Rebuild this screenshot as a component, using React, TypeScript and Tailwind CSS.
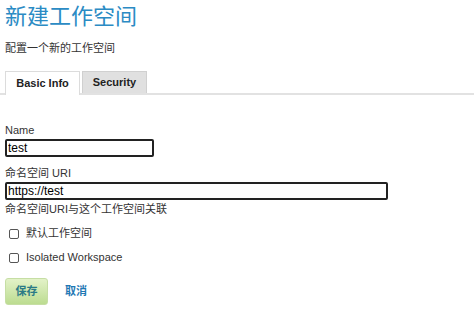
import React, { useState } from 'react';

const sans = '"Liberation Sans", "Noto Sans CJK SC", sans-serif';

export default function App() {
    const [name, setName] = useState('test');
    const [uri, setUri] = useState('https://test');
    const [isDefault, setIsDefault] = useState(false);
    const [isolated, setIsolated] = useState(false);

    return (
        <div className="w-[474px] h-[310px] bg-white text-[#333] overflow-hidden" style={{ fontFamily: sans }}>
            <div className="pl-[5px]">
                <h1 className="pt-[4px] text-[22px] leading-[26px] text-[#2b8bc4]">新建工作空间</h1>
                <p className="mt-[11px] text-[11px] leading-[14px] text-[#333]">配置一个新的工作空间</p>
            </div>

            <div className="mt-[16px] flex items-end gap-[2px] pl-[5px] border-b-2 border-[#e2e2e2] h-[24px]">
                <div className="h-[24px] -mb-[2px] w-[75px] flex items-center justify-center bg-white border border-b-0 border-[#dcdcdc] text-[11px] font-bold text-[#222]">
                    Basic Info
                </div>
                <div className="h-[22px] w-[65px] flex items-center justify-center bg-[#e0e0e0] border border-b-0 border-[#d0d0d0] text-[11px] font-bold text-[#222]">
                    Security
                </div>
            </div>

            <form className="pl-[5px] pt-[29px]">
                <label className="block text-[11px] leading-[13px] text-[#333]">Name</label>
                <input
                    value={name}
                    onChange={(e) => setName(e.target.value)}
                    className="mt-[2px] block w-[149px] h-[18px] border-2 border-[#222] rounded-[2px] px-[1px] text-[12px] leading-[14px] text-black outline-none"
                    style={{ fontFamily: sans }}
                />
                <label className="block mt-[10px] text-[11px] leading-[13px] text-[#333]">命名空间 URI</label>
                <input
                    value={uri}
                    onChange={(e) => setUri(e.target.value)}
                    className="mt-[2px] block w-[383px] h-[18px] border-2 border-[#222] rounded-[2px] px-[1px] text-[12px] leading-[14px] text-black outline-none"
                    style={{ fontFamily: sans }}
                />
                <p className="mt-[3px] text-[11px] leading-[13px] text-[#333]">命名空间URI与这个工作空间关联</p>

                <label className="mt-[11px] ml-[4px] h-[13px] flex items-center gap-[7px] text-[11px] leading-[13px] text-[#333]">
                    <input
                        type="checkbox"
                        checked={isDefault}
                        onChange={(e) => setIsDefault(e.target.checked)}
                        className="appearance-none w-[10px] h-[10px] border border-[#555] rounded-[2px] bg-white"
                    />
                    默认工作空间
                </label>
                <label className="mt-[11px] ml-[4px] h-[13px] flex items-center gap-[7px] text-[11px] leading-[13px] text-[#333]">
                    <input
                        type="checkbox"
                        checked={isolated}
                        onChange={(e) => setIsolated(e.target.checked)}
                        className="appearance-none w-[10px] h-[10px] border border-[#555] rounded-[2px] bg-white"
                    />
                    Isolated Workspace
                </label>

                <div className="mt-[14px] flex items-center gap-[17px]">
                    <button
                        type="button"
                        className="w-[43px] h-[27px] rounded-[3px] border border-[#c6dea4] bg-gradient-to-b from-[#e3f2c8] to-[#bcdc90] text-[11px] font-bold text-[#2b7a86]"
                    >
                        保存
                    </button>
                    <button type="button" className="text-[11px] font-bold text-[#1f78b4]">
                        取消
                    </button>
                </div>
            </form>
        </div>
    );
}
